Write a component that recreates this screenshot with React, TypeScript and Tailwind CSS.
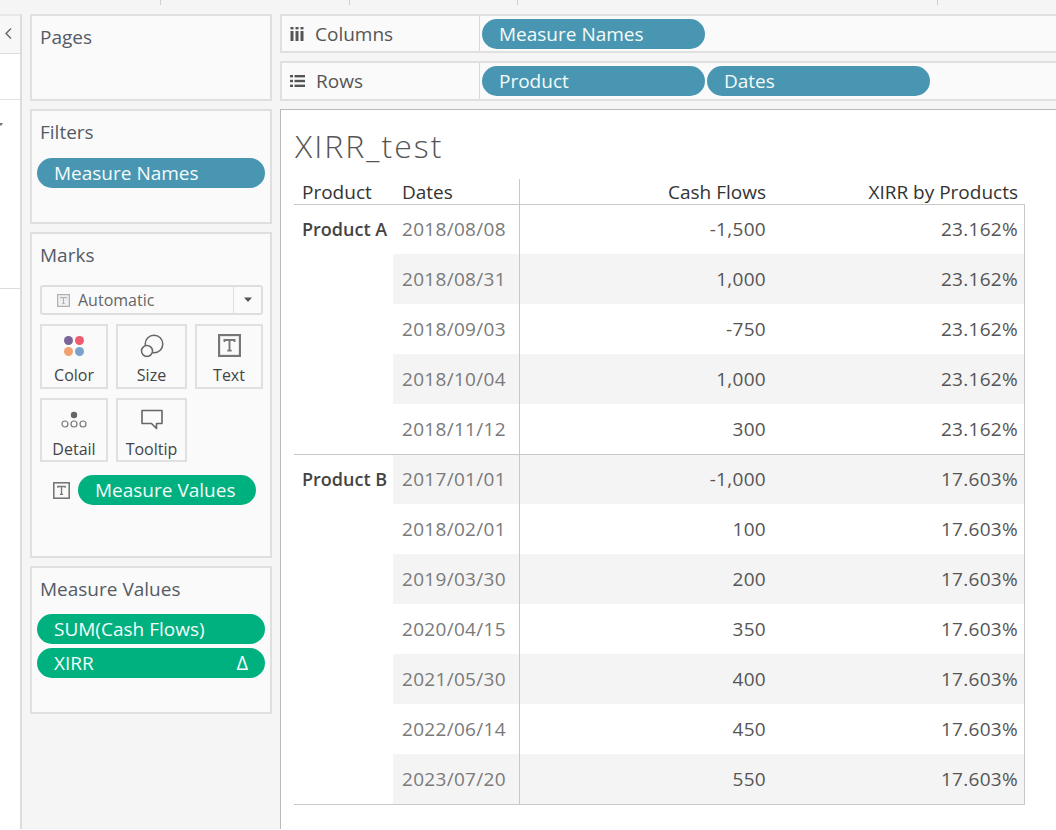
import React from "react";

const font = "font-['Open_Sans','Noto_Sans',sans-serif]";

function TIcon({ size = 16, color = "#8a8a8a", bg = "#efefef" }: { size?: number; color?: string; bg?: string }) {
  return (
    <svg width={size} height={size} viewBox="0 0 16 16">
      <rect x="0.75" y="0.75" width="14.5" height="14.5" fill={bg} stroke={color} strokeWidth="1.5" />
      <path d="M4.5 5.5V4.2h7v1.3M8 4.2v7.4M6.5 11.6h3" fill="none" stroke={color} strokeWidth="1.3" />
    </svg>
  );
}

function Pill({ w, color, children, right }: { w: string; color: "blue" | "green"; children: React.ReactNode; right?: React.ReactNode }) {
  return (
    <div
      className={`${w} ${color === "blue" ? "bg-[#4996b2]" : "bg-[#00b180]"} h-[30px] rounded-[15px] flex items-center justify-between pl-[17px] pr-[17px] text-[19px] leading-none text-[#f4fbfa] shrink-0`}
    >
      <span>{children}</span>
      {right}
    </div>
  );
}

function Panel({ title, h, children }: { title: string; h: string; children?: React.ReactNode }) {
  return (
    <div className={`${h} border-2 border-[#dfdfdf] bg-[#fafafa] flex flex-col`}>
      <div className="pl-[8px] pt-[8px] text-[19px] leading-[26px] text-[#555b66]">{title}</div>
      {children}
    </div>
  );
}

function MarkBtn({ w, h, label, icon }: { w: string; h: string; label: string; icon: React.ReactNode }) {
  return (
    <div className={`${w} ${h} border-2 border-[#e0e0e0] flex flex-col items-center text-[16px] leading-[20px] text-[#444]`}>
      <div className="h-[39px] flex items-center justify-center">{icon}</div>
      <div>{label}</div>
    </div>
  );
}

const rowsA = [
  ["2018/08/08", "-1,500", "23.162%"],
  ["2018/08/31", "1,000", "23.162%"],
  ["2018/09/03", "-750", "23.162%"],
  ["2018/10/04", "1,000", "23.162%"],
  ["2018/11/12", "300", "23.162%"],
];
const rowsB = [
  ["2017/01/01", "-1,000", "17.603%"],
  ["2018/02/01", "100", "17.603%"],
  ["2019/03/30", "200", "17.603%"],
  ["2020/04/15", "350", "17.603%"],
  ["2021/05/30", "400", "17.603%"],
  ["2022/06/14", "450", "17.603%"],
  ["2023/07/20", "550", "17.603%"],
];

function Group({ name, rows, start }: { name: string; rows: string[][]; start: number }) {
  return (
    <div className="flex border-b border-[#c8c8c8] w-[731px]">
      <div className="w-[99px] shrink-0 pl-[8px] pt-[11px] text-[18px] leading-[26px] font-semibold text-[#444]">{name}</div>
      <div className="flex-1 flex flex-col">
        {rows.map((r, i) => (
          <div
            key={r[0]}
            className={`${i === 0 ? "h-[49px]" : "h-[50px]"} flex items-center text-[19px] tracking-[0.3px] ${(i + start) % 2 === 1 ? "bg-[#f4f4f4]" : "bg-white"}`}
          >
            <div className="w-[127px] pl-[9px] text-[#7a7a7a] h-full flex items-center border-r border-[#c8c8c8]">{r[0]}</div>
            <div className="w-[252px] pr-[6px] text-right text-[#555]">{r[1]}</div>
            <div className="w-[253px] pr-[6px] text-right text-[#555] h-full flex items-center justify-end border-r border-[#c8c8c8]">{r[2]}</div>
          </div>
        ))}
      </div>
    </div>
  );
}

function Shelf({ label, icon, h, first, children }: { label: string; icon: React.ReactNode; h: string; first?: boolean; children: React.ReactNode }) {
  return (
    <div className={`${h} border-y-2 border-l-2 border-[#e0e0e0] bg-[#fafafa] flex items-center`}>
      <div className="w-[198px] h-full flex items-center pl-[8px] gap-[11px] text-[19px] text-[#555] border-r border-[#d8d8d8] shrink-0">
        {icon}
        <span className="pt-[1px]">{label}</span>
      </div>
      <div className={`pl-[2px] flex gap-[2px] ${first ? "pt-[1px]" : ""}`}>{children}</div>
    </div>
  );
}

export default function App() {
  return (
    <div className={`${font} w-[1056px] h-[830px] overflow-hidden bg-white`}>
      <div className="h-[829px] bg-[#f5f5f5] flex flex-col">
        <div className="h-[5px] flex shrink-0">
          <div className="w-[161px] border-r border-[#d0d0d0]" />
          <div className="w-[189px] border-r border-[#d0d0d0]" />
          <div className="w-[168px] border-r border-[#d0d0d0]" />
          <div className="w-[420px] border-r border-[#d0d0d0]" />
        </div>
        <div className="flex flex-1 pt-[9px] min-h-0">
          {/* Left strip */}
          <div className="w-[22px] shrink-0 border-r-2 border-[#dcdcdc] flex flex-col">
            <div className="h-[40px] bg-[#f7f7f7] border-t-2 border-[#e8e8e8] border-b border-b-[#dcdcdc] pb-[2px] flex items-center justify-end pr-[7px]">
              <svg width="9" height="13" viewBox="0 0 9 13"><path d="M7 1.5 2 6.5l5 5" fill="none" stroke="#666" strokeWidth="1.4" /></svg>
            </div>
            <div className="h-[46px] bg-white border-b border-[#e2e2e2]" />
            <div className="h-[189px] bg-white border-b border-[#dcdcdc] relative">
              <svg className="absolute left-0 top-[22px]" width="4" height="6" viewBox="0 0 4 6"><path d="M-2 1h5L1 4z" fill="#777" /></svg>
            </div>
            <div className="flex-1 bg-white" />
          </div>

          {/* Sidebar */}
          <div className="w-[258px] shrink-0 pl-[8px] pr-[8px] flex flex-col gap-[8px]">
            <Panel title="Pages" h="h-[87px]" />
            <Panel title="Filters" h="h-[115px]">
              <div className="pl-[5px] pt-[13px]"><Pill w="w-[228px]" color="blue">Measure Names</Pill></div>
            </Panel>
            <Panel title="Marks" h="h-[326px]">
              <div className="pl-[8px] pt-[17px] flex flex-col gap-[9px]">
                <div className="w-[223px] h-[30px] border-2 border-[#dedede] rounded-[3px] flex items-center text-[16px] text-[#666]">
                  <div className="flex-1 flex items-center pl-[15px] gap-[8px]">
                    <TIcon size={13} color="#b0b0b0" />
                    <span>Automatic</span>
                  </div>
                  <div className="w-[28px] h-full border-l border-[#dedede] flex items-center justify-center">
                    <svg width="10" height="6" viewBox="0 0 10 6"><path d="M1 0.5h8L5 5z" fill="#555" /></svg>
                  </div>
                </div>
                <div className="flex gap-[8px]">
                  <MarkBtn w="w-[68px]" h="h-[65px]" label="Color" icon={
                    <svg width="22" height="22" viewBox="0 0 22 22">
                      <circle cx="5.5" cy="5.5" r="4.5" fill="#7c6596" />
                      <circle cx="16.5" cy="5.5" r="4.5" fill="#ef5a6c" />
                      <circle cx="5.5" cy="16.5" r="4.5" fill="#f3a071" />
                      <circle cx="16.5" cy="16.5" r="4.5" fill="#79a2cc" />
                    </svg>
                  } />
                  <MarkBtn w="w-[71px]" h="h-[65px]" label="Size" icon={
                    <svg width="24" height="24" viewBox="0 0 24 24" fill="none" stroke="#666" strokeWidth="1.5">
                      <circle cx="14" cy="10" r="8.8" />
                      <circle cx="7" cy="17" r="5.5" fill="#fafafa" />
                    </svg>
                  } />
                  <MarkBtn w="w-[68px]" h="h-[65px]" label="Text" icon={<TIcon size={23} color="#777" bg="#fafafa" />} />
                </div>
                <div className="flex gap-[8px]">
                  <MarkBtn w="w-[68px]" h="h-[64px]" label="Detail" icon={
                    <svg width="26" height="18" viewBox="0 0 26 18" fill="none" stroke="#777" strokeWidth="1.2">
                      <circle cx="13" cy="4" r="3.2" fill="#666" stroke="none" />
                      <circle cx="4" cy="13" r="3" />
                      <circle cx="13" cy="13" r="3" />
                      <circle cx="22" cy="13" r="3" />
                    </svg>
                  } />
                  <MarkBtn w="w-[71px]" h="h-[64px]" label="Tooltip" icon={
                    <svg width="24" height="22" viewBox="0 0 24 22" fill="none" stroke="#666" strokeWidth="1.6">
                      <path d="M2 1.5h20v13h-5.5v5l-5-5H2z" strokeLinejoin="round" />
                    </svg>
                  } />
                </div>
                <div className="flex items-center pl-[13px] gap-[8px] pt-[4px]">
                  <TIcon size={17} color="#777" bg="#fafafa" />
                  <Pill w="w-[178px]" color="green">Measure Values</Pill>
                </div>
              </div>
            </Panel>
            <Panel title="Measure Values" h="h-[148px]">
              <div className="pl-[5px] pt-[12px] flex flex-col gap-[4px]">
                <Pill w="w-[228px]" color="green">SUM(Cash Flows)</Pill>
                <Pill w="w-[228px]" color="green" right={<span className="text-[20px]">Δ</span>}>XIRR</Pill>
              </div>
            </Panel>
          </div>

          {/* Right */}
          <div className="flex-1 flex flex-col gap-[8px] min-w-0">
            <Shelf label="Columns" h="h-[39px]" first icon={
              <svg width="14" height="14" viewBox="0 0 14 14" fill="#555"><rect x="0.5" y="4" width="3" height="10" /><rect x="5.5" y="4" width="3" height="10" /><rect x="10.5" y="4" width="3" height="10" /><rect x="0.5" y="0" width="3" height="2.4" /><rect x="5.5" y="0" width="3" height="2.4" /><rect x="10.5" y="0" width="3" height="2.4" /></svg>
            }>
              <Pill w="w-[223px]" color="blue">Measure Names</Pill>
            </Shelf>
            <Shelf label="Rows" h="h-[40px]" icon={
              <svg width="15" height="14" viewBox="0 0 15 14" fill="#555"><rect x="0" y="1" width="3" height="2.4" /><rect x="4.5" y="1" width="10.5" height="2.4" /><rect x="0" y="5.8" width="3" height="2.4" /><rect x="4.5" y="5.8" width="10.5" height="2.4" /><rect x="0" y="10.6" width="3" height="2.4" /><rect x="4.5" y="10.6" width="10.5" height="2.4" /></svg>
            }>
              <Pill w="w-[223px]" color="blue">Product</Pill>
              <Pill w="w-[223px]" color="blue">Dates</Pill>
            </Shelf>
            <div className="flex-1 bg-white border-t border-l border-[#b9b9b9] pl-[13px]">
              <div className="h-[69px] pl-[1px] pt-[14px] text-[32px] leading-[44px] tracking-[2px] font-light text-[#555]">XIRR_test</div>
              <div className="flex w-[731px] h-[26px] border-b border-[#c8c8c8] text-[19px] leading-[26px] text-[#333]">
                <div className="w-[99px] pl-[8px]">Product</div>
                <div className="w-[127px] pl-[9px] border-r border-[#c8c8c8]">Dates</div>
                <div className="w-[252px] pr-[6px] text-right">Cash Flows</div>
                <div className="w-[253px] pr-[7px] text-right">XIRR by Products</div>
              </div>
              <Group name="Product A" rows={rowsA} start={0} />
              <Group name="Product B" rows={rowsB} start={1} />
            </div>
          </div>
        </div>
      </div>
    </div>
  );
}
